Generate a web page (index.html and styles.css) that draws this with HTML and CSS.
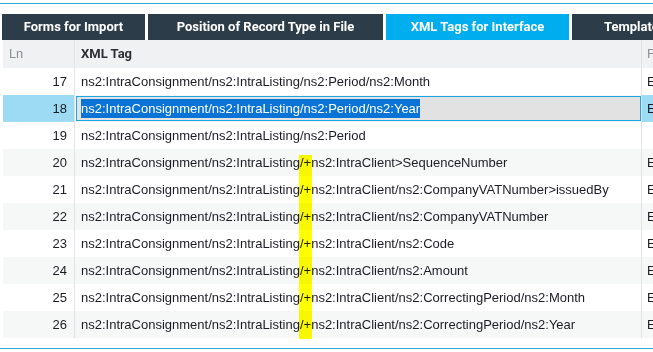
FILE: index.html
```html
<!DOCTYPE html>
<html lang="en">
<head>
  <meta charset="UTF-8" />
  <title>XML Tags for Interface</title>
  <link rel="stylesheet" href="styles.css">
</head>
<body>
  <div class="topline"></div>
  <div class="tabs">
    <div class="tab tab-forms">Forms for Import</div>
    <div class="tab tab-position">Position of Record Type in File</div>
    <div class="tab tab-xml active">XML Tags for Interface</div>
    <div class="tab tab-template">Templates</div>
  </div>

  <div class="grid">
    <div class="row head">
      <div class="cell ln">Ln</div>
      <div class="cell tag">XML Tag</div>
      <div class="cell extra">Format</div>
    </div>
    <div class="row">
      <div class="cell ln">17</div>
      <div class="cell tag">ns2:IntraConsignment/ns2:IntraListing/ns2:Period/ns2:Month</div>
      <div class="cell extra">Element</div>
    </div>
    <div class="row selected">
      <div class="cell ln">18</div>
      <div class="cell tag"><div class="editor"><span class="sel">ns2:IntraConsignment/ns2:IntraListing/ns2:Period/ns2:Year</span></div></div>
      <div class="cell extra">Element</div>
    </div>
    <div class="row">
      <div class="cell ln">19</div>
      <div class="cell tag">ns2:IntraConsignment/ns2:IntraListing/ns2:Period</div>
      <div class="cell extra"></div>
    </div>
    <div class="row">
      <div class="cell ln">20</div>
      <div class="cell tag">ns2:IntraConsignment/ns2:IntraListing/+ns2:IntraClient&gt;SequenceNumber</div>
      <div class="cell extra">Element</div>
    </div>
    <div class="row">
      <div class="cell ln">21</div>
      <div class="cell tag">ns2:IntraConsignment/ns2:IntraListing/+ns2:IntraClient/ns2:CompanyVATNumber&gt;issuedBy</div>
      <div class="cell extra">Element</div>
    </div>
    <div class="row">
      <div class="cell ln">22</div>
      <div class="cell tag">ns2:IntraConsignment/ns2:IntraListing/+ns2:IntraClient/ns2:CompanyVATNumber</div>
      <div class="cell extra">Element</div>
    </div>
    <div class="row">
      <div class="cell ln">23</div>
      <div class="cell tag">ns2:IntraConsignment/ns2:IntraListing/+ns2:IntraClient/ns2:Code</div>
      <div class="cell extra">Element</div>
    </div>
    <div class="row">
      <div class="cell ln">24</div>
      <div class="cell tag">ns2:IntraConsignment/ns2:IntraListing/+ns2:IntraClient/ns2:Amount</div>
      <div class="cell extra">Element</div>
    </div>
    <div class="row">
      <div class="cell ln">25</div>
      <div class="cell tag">ns2:IntraConsignment/ns2:IntraListing/+ns2:IntraClient/ns2:CorrectingPeriod/ns2:Month</div>
      <div class="cell extra">Element</div>
    </div>
    <div class="row">
      <div class="cell ln">26</div>
      <div class="cell tag">ns2:IntraConsignment/ns2:IntraListing/+ns2:IntraClient/ns2:CorrectingPeriod/ns2:Year</div>
      <div class="cell extra">Element</div>
    </div>
    <!-- marker over the repeated "/+" column -->
    <div class="marker"></div>
  </div>
  <div class="bottomline"></div>
</body>
</html>
```

FILE: styles.css
```css
body {
  margin: 0;
  background: white;
  font-family: "Liberation Sans", Arial, sans-serif;
  font-size: 13px;
  color: #1c1c24;
  overflow: hidden;
  width: 653px;
  height: 352px;
}
.topline {
  margin-top: 3px;
  height: 1px;
  background: #29a8e0;
}
.tabs {
  display: flex;
  gap: 3px;
  margin-top: 10px;
  padding-left: 2px;
  white-space: nowrap;
}
.tab {
  flex: none;
  height: 26px;
  line-height: 26px;
  background: #2c3d49;
  color: white;
  font-family: Roboto, sans-serif;
  font-weight: bold;
  font-size: 13px;
  text-align: center;
}
.tab-forms { width: 143px; }
.tab-position { width: 235px; }
.tab-xml { width: 183px; }
.tab-template {
  width: 130px;
  padding-left: 32px;
  text-align: left;
}
.tab.active {
  background: #00aeef;
}
.grid {
  position: relative;
  margin: 0 0 0 3px;
  width: 650px;
}
.row {
  display: grid;
  grid-template-columns: 72px 567px 1fr;
  height: 27px;
  background: white;
}
.row:nth-child(odd) {
  background: #f6f7f7;
}
.row.head {
  height: 28px;
  background: #f0f1f3;
}
.cell {
  line-height: 27px;
  white-space: nowrap;
  overflow: hidden;
}
.head .cell {
  line-height: 28px;
}
.ln {
  text-align: right;
  padding-right: 7px;
  border-right: 1px solid #e1e3e5;
}
.tag {
  padding-left: 6px;
  border-right: 1px solid #e1e3e5;
}
.extra {
  padding-left: 5px;
}
.head .ln {
  text-align: left;
  padding-left: 6px;
  color: #8b9197;
  font-family: Roboto, sans-serif;
}
.head .tag {
  font-family: Roboto, sans-serif;
  font-weight: bold;
  color: #2a2f35;
}
.head .extra {
  color: #8b9197;
  font-family: Roboto, sans-serif;
}
.selected .ln,
.selected .extra {
  background: #9ddbf5;
}
.selected .tag {
  padding-left: 1px;
  padding-top: 1px;
}
.editor {
  height: 23px;
  line-height: 23px;
  border: 1px solid #1aa6e1;
  background: #e2e2e2;
  padding-left: 4px;
}
.sel {
  background: #0a74d6;
  color: white;
  padding: 2px 0;
}
.marker {
  position: absolute;
  left: 296px;
  top: 115px;
  width: 13px;
  height: 184px;
  background: #ffff00;
  mix-blend-mode: multiply;
}
.bottomline {
  margin-top: 10px;
  height: 1px;
  background: #29a8e0;
}
```
